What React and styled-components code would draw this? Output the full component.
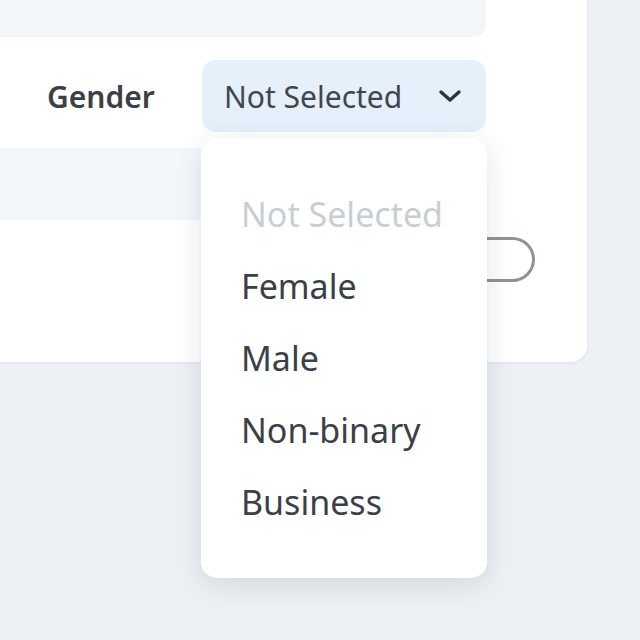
import styled, { createGlobalStyle } from "styled-components";

const GlobalStyle = createGlobalStyle`
  html, body {
    margin: 0;
    padding: 0;
    background: #edf0f4;
    font-family: "Noto Sans", "Open Sans", sans-serif;
    overflow: hidden;
  }
  #root {
    width: 640px;
    height: 640px;
  }
`;

const genders = ["Female", "Male", "Non-binary", "Business"];

const App = () => {
  return (
    <>
      <GlobalStyle />
      <Page>
        <Card>
          <TopField />
          <FieldRow>
            <Label>Gender</Label>
            <SelectWrap>
              <SelectButton type="button">
                Not Selected
                <svg width="24" height="14" viewBox="0 0 24 14" fill="none">
                  <polyline points="3,3 12,11 21,3" stroke="#2f353b" strokeWidth="3.4" strokeLinecap="round" strokeLinejoin="round" />
                </svg>
              </SelectButton>
              <Menu>
                <Option $placeholder>Not Selected</Option>
                {genders.map((g) => (
                  <Option key={g}>{g}</Option>
                ))}
              </Menu>
            </SelectWrap>
          </FieldRow>
          <Band />
          <ToggleRow>
            <Toggle>
              <Knob />
            </Toggle>
          </ToggleRow>
        </Card>
      </Page>
    </>
  );
};

export default App;

const Page = styled.div`
  width: 640px;
  height: 640px;
  overflow: hidden;
`;

const Card = styled.div`
  margin: -40px 0 0 -40px;
  width: 627px;
  height: 402px;
  background: #ffffff;
  border-radius: 16px;
  box-shadow: 0 1px 3px rgba(40, 50, 70, 0.08);
  display: flex;
  flex-direction: column;
  box-sizing: border-box;
  padding: 0 101px 0 0;
`;

const TopField = styled.div`
  height: 77px;
  background: #f3f6f9;
  border-radius: 0 0 12px 0;
  flex-shrink: 0;
`;

const FieldRow = styled.div`
  display: flex;
  align-items: center;
  padding: 23px 0 16px 87px;
`;

const Label = styled.div`
  width: 155px;
  font-size: 30px;
  font-weight: 600;
  color: #3b4047;
`;

const SelectWrap = styled.div`
  position: relative;
  flex: 1;
`;

const SelectButton = styled.button`
  width: 100%;
  height: 72px;
  display: flex;
  align-items: center;
  justify-content: space-between;
  padding: 0 24px 0 22px;
  box-sizing: border-box;
  border: none;
  border-radius: 14px;
  background: #e6f0fb;
  font-family: inherit;
  font-size: 30px;
  color: #40464d;
  cursor: pointer;
`;

const Menu = styled.div`
  position: absolute;
  top: 78px;
  left: -1px;
  right: -1px;
  z-index: 2;
  display: flex;
  flex-direction: column;
  padding: 40px 0 40px 40px;
  background: #ffffff;
  border-radius: 16px;
  box-shadow: 0 6px 28px rgba(30, 45, 70, 0.13);
`;

const Option = styled.div`
  height: 72px;
  line-height: 72px;
  font-size: 34px;
  color: ${(p) => (p.$placeholder ? "#c9ced4" : "#3a4047")};
`;

const Band = styled.div`
  height: 72px;
  background: #f4f7fa;
  border-radius: 0 12px 12px 0;
  flex-shrink: 0;
`;

const ToggleRow = styled.div`
  display: flex;
  justify-content: flex-end;
  padding: 17px 0 0 0;
  margin-right: -49px;
`;

const Toggle = styled.div`
  position: relative;
  width: 100px;
  height: 45px;
  box-sizing: border-box;
  border: 3px solid #8d9399;
  border-radius: 23px;
  background: #ffffff;
`;

const Knob = styled.div`
  position: absolute;
  left: 5px;
  top: 5px;
  width: 29px;
  height: 29px;
  border-radius: 50%;
  background: #8d9399;
`;
